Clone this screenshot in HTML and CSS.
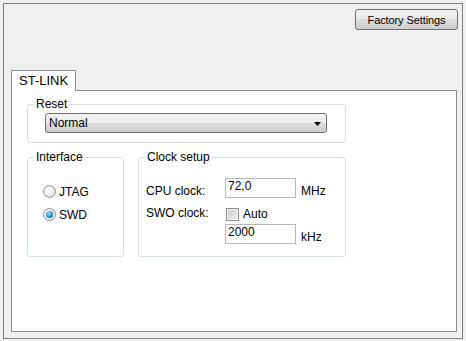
FILE: index.html
```html
<!DOCTYPE html>
<html lang="en">
<head>
<meta charset="UTF-8">
<meta name="viewport" content="width=device-width, initial-scale=1.0">
<title>ST-LINK Settings</title>
<link rel="stylesheet" href="styles.css">
</head>
<body>

<div class="frame">
  <div class="toolbar">
    <button class="btn" type="button">Factory Settings</button>
  </div>

  <div class="tabs">
    <div class="tab-strip">
      <div class="tab">ST-LINK</div>
    </div>
    <div class="panel">
      <fieldset class="group reset">
        <legend>Reset</legend>
        <div class="reset-body">
          <div class="combo">
            <span>Normal</span>
            <svg class="arrow" width="7" height="4" viewBox="0 0 7 4"><path d="M0 0h7L3.5 4z" fill="#000"/></svg>
          </div>
        </div>
      </fieldset>

      <div class="group-row">
        <fieldset class="group iface">
          <legend>Interface</legend>
          <div class="iface-body">
            <label class="opt"><span class="radio"></span>JTAG</label>
            <label class="opt"><span class="radio on"></span>SWD</label>
          </div>
        </fieldset>

        <fieldset class="group clock">
          <legend>Clock setup</legend>
          <div class="clock-body">
            <span class="lbl">CPU clock:</span>
            <input class="field" type="text" value="72,0">
            <span class="unit">MHz</span>

            <span class="lbl lbl-mid">SWO clock:</span>
            <label class="auto"><span class="check"></span>Auto</label>
            <span></span>

            <span></span>
            <input class="field" type="text" value="2000">
            <span class="unit">kHz</span>
          </div>
        </fieldset>
      </div>
    </div>
  </div>
</div>

</body>
</html>
```

FILE: styles.css
```css
body {
  margin: 0;
  font-family: "Liberation Sans", Arial, sans-serif;
  font-size: 12px;
  color: #000;
  background-color: #f0f0f0;
}
.frame {
  box-sizing: border-box;
  width: 460px;
  height: 336px;
  margin: 3px;
  border: 1px solid #7f7f7f;
  display: flex;
  flex-direction: column;
}
.toolbar {
  display: flex;
  justify-content: flex-end;
  padding: 5px 4px 0 0;
}
.btn {
  box-sizing: border-box;
  width: 103px;
  height: 21px;
  padding: 0;
  border: 1px solid #707070;
  border-radius: 3px;
  background: linear-gradient(#f2f2f2, #ebebeb 50%, #dddddd 50%, #cfcfcf);
  font-family: inherit;
  font-size: 11px;
  letter-spacing: -0.1px;
  color: #000;
}
.tabs {
  flex: 1;
  display: flex;
  flex-direction: column;
  margin-top: 40px;
  padding: 0 5px 6px 7px;
}
.tab-strip {
  display: flex;
}
.tab {
  position: relative;
  z-index: 1;
  height: 20px;
  margin-bottom: -1px;
  padding: 0 7px 0 7px;
  line-height: 20px;
  font-size: 13px;
  background-color: #fff;
  border: 1px solid #898c95;
  border-bottom: none;
}
.panel {
  flex: 1;
  background-color: #fff;
  border: 1px solid #898c95;
  padding: 6px 0 0 15px;
}
.group {
  margin: 0;
  padding: 0;
  border: 1px solid #d5dfe5;
  border-radius: 3px;
  min-width: 0;
}
.group legend {
  margin-left: 6px;
  padding: 0 2px;
  line-height: 14px;
  font-size: 12px;
}
.reset {
  width: 319px;
  box-sizing: border-box;
}
.reset-body {
  padding: 2px 17px 9px 17px;
}
.combo {
  box-sizing: border-box;
  width: 282px;
  height: 20px;
  display: flex;
  align-items: center;
  justify-content: space-between;
  padding: 0 5px 0 3px;
  border: 1px solid #707070;
  border-radius: 3px;
  background: linear-gradient(#f2f2f2, #ebebeb 50%, #dddddd 50%, #cfcfcf);
}
.arrow {
  margin-top: 2px;
}
.group-row {
  display: flex;
  gap: 14px;
  margin-top: 7px;
}
.iface {
  width: 97px;
  box-sizing: border-box;
}
.iface-body {
  padding: 16px 0 0 15px;
}
.opt {
  display: flex;
  align-items: center;
  gap: 3px;
  height: 23px;
}
.radio {
  box-sizing: border-box;
  width: 13px;
  height: 13px;
  border-radius: 50%;
  border: 1px solid #939393;
  background: radial-gradient(circle at 40% 40%, #ffffff, #d4d4d4);
  display: flex;
  align-items: center;
  justify-content: center;
}
.radio.on::after {
  content: "";
  width: 7px;
  height: 7px;
  border-radius: 50%;
  background: radial-gradient(circle at 40% 35%, #a8e4ff, #1d7fc7 60%, #0b4f8a);
}
.clock {
  width: 208px;
  box-sizing: border-box;
}
.clock-body {
  display: grid;
  grid-template-columns: 79px 71px auto;
  grid-template-rows: 20px 26px 20px;
  padding: 14px 0 12px 7px;
}
.lbl, .unit {
  align-self: end;
  line-height: 14px;
}
.unit {
  padding-left: 5px;
}
.lbl-mid {
  margin-bottom: 4px;
}
.field {
  box-sizing: border-box;
  width: 71px;
  height: 20px;
  margin: 0;
  padding: 0 0 4px 2px;
  border: 1px solid #b9b9b9;
  font-family: inherit;
  font-size: 12px;
  color: #000;
  background-color: #fff;
}
.auto {
  align-self: end;
  display: flex;
  align-items: center;
  gap: 4px;
  margin: 0 0 3px 1px;
  line-height: 14px;
}
.check {
  box-sizing: border-box;
  width: 13px;
  height: 13px;
  border: 1px solid #8f8f8f;
  box-shadow: inset 0 0 0 1px #f4f4f4;
  background: linear-gradient(135deg, #c9c9c9, #f0f0f0);
}
```
